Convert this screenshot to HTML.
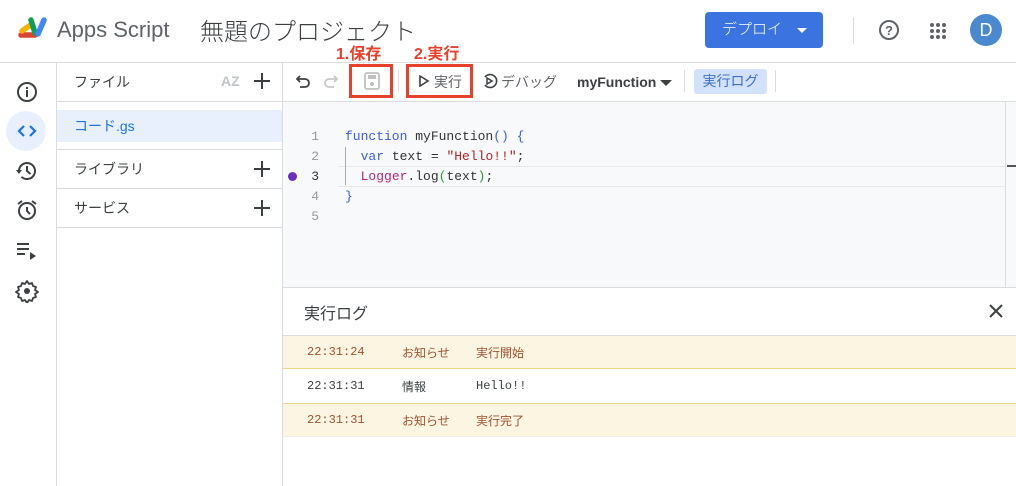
<!DOCTYPE html>
<html><head><meta charset="utf-8"><style>
*{margin:0;padding:0;box-sizing:border-box}
body{width:1016px;height:486px;overflow:hidden;background:#fff;font-family:"Liberation Sans","Noto Sans CJK JP",sans-serif;color:#3c4043;position:relative}
.a{position:absolute}
.hl{position:absolute;background:#dadce0}
.mono{font-family:"Liberation Mono","Noto Sans CJK JP",monospace}
</style></head><body>
<!-- header -->
<svg class="a" style="left:17px;top:15px" width="38" height="26" viewBox="0 0 38 26">
<g stroke-linecap="round" stroke-width="5.5" fill="none">
<line x1="4" y1="20" x2="18" y2="20" stroke="#db4437"/>
<line x1="5" y1="16" x2="15" y2="9" stroke="#f4b400"/>
<line x1="14" y1="5" x2="18" y2="18" stroke="#0f9d58"/>
<line x1="27" y1="5" x2="21" y2="19" stroke="#4285f4"/>
</g></svg>
<div class="a" style="left:57px;top:17px;font-size:22px;color:#5f6368">Apps Script</div>
<div class="a" style="left:200px;top:12px;font-size:24px;font-weight:300;color:#3c4043">無題のプロジェクト</div>
<div class="a" style="left:705px;top:12px;width:118px;height:36px;background:#3b74e0;border-radius:4px;color:#fff;font-size:15px;line-height:36px;padding-left:17px;font-weight:300">デプロイ<span style="position:absolute;left:92px;top:16px;border-left:5px solid transparent;border-right:5px solid transparent;border-top:5px solid #fff"></span></div>
<div class="hl" style="left:853px;top:17px;width:1px;height:27px"></div>
<svg class="a" style="left:878px;top:19px" width="22" height="22" viewBox="0 0 22 22"><circle cx="11" cy="11" r="9" fill="none" stroke="#5f6368" stroke-width="2"/><text x="11" y="16" font-size="13" font-weight="bold" text-anchor="middle" fill="#5f6368" font-family="Liberation Sans">?</text></svg>
<svg class="a" style="left:930px;top:23px" width="16" height="16" fill="#5f6368"><circle cx="2" cy="2" r="2"/><circle cx="8" cy="2" r="2"/><circle cx="14" cy="2" r="2"/><circle cx="2" cy="8" r="2"/><circle cx="8" cy="8" r="2"/><circle cx="14" cy="8" r="2"/><circle cx="2" cy="14" r="2"/><circle cx="8" cy="14" r="2"/><circle cx="14" cy="14" r="2"/></svg>
<div class="a" style="left:970px;top:14px;width:32px;height:32px;border-radius:50%;background:#4a89d0;color:#fff;font-size:18px;text-align:center;line-height:32px">D</div>
<div class="hl" style="left:0;top:62px;width:1016px;height:1px"></div>
<!-- left rail -->
<div class="hl" style="left:56px;top:62px;width:1px;height:424px"></div>
<svg class="a" style="left:16px;top:81px" width="22" height="22"><circle cx="11" cy="11" r="9" fill="none" stroke="#3c4043" stroke-width="2"/><rect x="10" y="9" width="2" height="7" fill="#3c4043"/><rect x="10" y="6" width="2" height="2" fill="#3c4043"/></svg>
<div class="a" style="left:6px;top:111px;width:40px;height:40px;border-radius:50%;background:#e8f0fe"></div>
<svg class="a" style="left:16px;top:122px" width="22" height="18"><path d="M8 4 L3 9 L8 14 M14 4 L19 9 L14 14" fill="none" stroke="#1a73e8" stroke-width="2.2"/></svg>
<svg class="a" style="left:15px;top:159px" width="24" height="24" viewBox="0 0 24 24"><path d="M4 12a8 8 0 1 1 2.5 5.8" fill="none" stroke="#3c4043" stroke-width="2"/><path d="M1 11h6l-3 4z" fill="#3c4043"/><path d="M12 7v5l3.5 3" fill="none" stroke="#3c4043" stroke-width="2"/></svg>
<svg class="a" style="left:15px;top:198px" width="24" height="24" viewBox="0 0 24 24"><circle cx="12" cy="13" r="8" fill="none" stroke="#3c4043" stroke-width="2"/><path d="M12 9v4l3 3M3 6l4-3M21 6l-4-3" fill="none" stroke="#3c4043" stroke-width="2"/></svg>
<svg class="a" style="left:16px;top:241px" width="22" height="20"><path d="M1 3h12M1 8h12M1 13h8" stroke="#3c4043" stroke-width="2"/><path d="M14 11l6 4-6 4z" fill="#3c4043"/></svg>
<svg class="a" style="left:15px;top:279px" width="24" height="24" viewBox="0 0 24 24"><path d="M12 2l2 3 3-1 1 3 3 1-1 3 3 2-3 2 1 3-3 1-1 3-3-1-2 3-2-3-3 1-1-3-3-1 1-3-3-2 3-2-1-3 3-1 1-3 3 1z" fill="none" stroke="#3c4043" stroke-width="1.8" stroke-linejoin="round"/><circle cx="12" cy="12" r="3" fill="#3c4043"/></svg>
<!-- files panel -->
<div class="hl" style="left:282px;top:62px;width:1px;height:424px"></div>
<div class="a" style="left:74px;top:72px;font-size:14px;color:#3c4043">ファイル</div>
<div class="a" style="left:221px;top:73px;font-size:14px;color:#c0c4c8;font-weight:bold">AZ</div>
<svg class="a" style="left:253px;top:72px" width="18" height="18"><path d="M9 1v16M1 9h16" stroke="#3c4043" stroke-width="2"/></svg>
<div class="hl" style="left:57px;top:101px;width:226px;height:1px"></div>
<div class="a" style="left:57px;top:110px;width:225px;height:32px;background:#e8f0fe"></div>
<div class="a" style="left:74px;top:116px;font-size:14px;color:#1a73e8">コード.gs</div>
<div class="hl" style="left:57px;top:149px;width:226px;height:1px"></div>
<div class="a" style="left:74px;top:159px;font-size:14px">ライブラリ</div>
<svg class="a" style="left:253px;top:160px" width="18" height="18"><path d="M9 1v16M1 9h16" stroke="#3c4043" stroke-width="2"/></svg>
<div class="hl" style="left:57px;top:188px;width:226px;height:1px"></div>
<div class="a" style="left:74px;top:198px;font-size:14px">サービス</div>
<svg class="a" style="left:253px;top:199px" width="18" height="18"><path d="M9 1v16M1 9h16" stroke="#3c4043" stroke-width="2"/></svg>
<div class="hl" style="left:57px;top:227px;width:226px;height:1px"></div>
<!-- toolbar -->
<div class="hl" style="left:283px;top:101px;width:733px;height:1px"></div>
<svg class="a" style="left:296px;top:73px" width="16" height="16"><path d="M4 3L1 6l3 3" fill="none" stroke="#3c4043" stroke-width="1.8"/><path d="M1 6h8a4 4 0 0 1 0 8H4" fill="none" stroke="#3c4043" stroke-width="1.8"/></svg>
<svg class="a" style="left:322px;top:73px" width="16" height="16"><path d="M12 3l3 3-3 3" fill="none" stroke="#c8c8c8" stroke-width="1.8"/><path d="M15 6H7a4 4 0 0 0 0 8h5" fill="none" stroke="#c8c8c8" stroke-width="1.8"/></svg>
<div class="a" style="left:349px;top:64px;width:44px;height:34px;border:3px solid #e8412b"></div>
<svg class="a" style="left:364px;top:72px" width="16" height="18"><rect x="1" y="1" width="14" height="16" rx="2" fill="none" stroke="#c0c0c0" stroke-width="1.8"/><rect x="4" y="3" width="8" height="4" fill="#c0c0c0"/><circle cx="8" cy="12" r="2" fill="#c0c0c0"/></svg>
<div class="hl" style="left:398px;top:70px;width:1px;height:22px"></div>
<div class="a" style="left:406px;top:64px;width:67px;height:34px;border:3px solid #e8412b"></div>
<svg class="a" style="left:418px;top:75px" width="12" height="12"><path d="M2 1l8 5-8 5z" fill="none" stroke="#3c4043" stroke-width="1.6"/></svg>
<div class="a" style="left:434px;top:72px;font-size:14px;color:#5f6368">実行</div>
<svg class="a" style="left:482px;top:73px" width="16" height="16"><path d="M3 4a6.5 6.5 0 1 1 0 8" fill="none" stroke="#3c4043" stroke-width="1.6"/><path d="M5 5l5 3-5 3z" fill="none" stroke="#3c4043" stroke-width="1.5"/></svg>
<div class="a" style="left:501px;top:72px;font-size:14px;color:#5f6368">デバッグ</div>
<div class="a" style="left:577px;top:74px;font-size:14px;font-weight:bold;color:#3c4043">myFunction</div>
<div class="a" style="left:660px;top:80px;border-left:6px solid transparent;border-right:6px solid transparent;border-top:6px solid #3c4043"></div>
<div class="hl" style="left:684px;top:70px;width:1px;height:22px"></div>
<div class="a" style="left:694px;top:69px;width:73px;height:25px;background:#d3e2fc;border-radius:3px;font-size:14px;text-align:center;line-height:24px;color:#3e6fc8">実行ログ</div>
<div class="hl" style="left:775px;top:70px;width:1px;height:22px"></div>
<div class="a" style="left:336px;top:40px;font-size:16px;font-weight:bold;color:#e8412b">1.保存</div>
<div class="a" style="left:414px;top:40px;font-size:16px;font-weight:bold;color:#e8412b">2.実行</div>
<!-- editor -->
<div class="a" style="left:283px;top:102px;width:733px;height:185px;background:#f8f9fa"></div>
<div class="hl" style="left:1005px;top:102px;width:1px;height:185px"></div>
<div class="a" style="left:1007px;top:165px;width:9px;height:2px;background:#555"></div>
<div class="a" style="left:338px;top:166px;width:667px;height:1px;background:#e6e8eb"></div>
<div class="a" style="left:338px;top:186px;width:667px;height:1px;background:#e6e8eb"></div>
<div class="a" style="left:345px;top:147px;width:1px;height:38px;background:#aaa"></div>
<div class="a" style="left:288px;top:172px;width:9px;height:9px;border-radius:50%;background:#6b2fbf"></div>
<div class="a mono" style="left:305px;top:127px;font-size:13px;line-height:20px;color:#999;text-align:right;width:14px">1<br>2<br><span style="color:#333">3</span><br>4<br>5</div>
<div class="a mono" style="left:345px;top:127px;font-size:13px;line-height:20px;color:#333;white-space:pre"><span style="color:#3b5fd8">function</span> myFunction<span style="color:#3b5fd8">() {</span>
  <span style="color:#3b5fd8">var</span> text = <span style="color:#b22222">"Hello!!"</span>;
  <span style="color:#b0287a">Logger</span>.log<span style="color:#2a9d3a">(</span>text<span style="color:#2a9d3a">)</span>;
<span style="color:#3b5fd8">}</span></div>
<div class="hl" style="left:283px;top:287px;width:733px;height:1px"></div>
<!-- log -->
<div class="a" style="left:304px;top:300px;font-size:16px;color:#3c4043">実行ログ</div>
<svg class="a" style="left:988px;top:303px" width="16" height="16"><path d="M2 2l12 12M14 2L2 14" stroke="#3c4043" stroke-width="2"/></svg>
<div class="hl" style="left:283px;top:335px;width:733px;height:1px"></div>
<div class="a" style="left:283px;top:336px;width:733px;height:33px;background:#fcf5e2;border-bottom:1px solid #f0d38a"></div>
<div class="a" style="left:283px;top:403px;width:733px;height:34px;background:#fcf5e2;border-top:1px solid #f0d38a"></div>
<div class="a" style="left:283px;top:436px;width:733px;height:1px;background:#eee"></div>
<div class="a mono" style="left:307px;top:345px;font-size:12px;color:#a0522d">22:31:24</div>
<div class="a" style="left:402px;top:344px;font-size:12px;color:#a0522d">お知らせ</div>
<div class="a" style="left:476px;top:344px;font-size:12px;color:#a0522d">実行開始</div>
<div class="a mono" style="left:307px;top:379px;font-size:12px;color:#3c4043">22:31:31</div>
<div class="a" style="left:402px;top:378px;font-size:12px;color:#3c4043">情報</div>
<div class="a mono" style="left:476px;top:379px;font-size:12px;color:#3c4043">Hello!!</div>
<div class="a mono" style="left:307px;top:413px;font-size:12px;color:#a0522d">22:31:31</div>
<div class="a" style="left:402px;top:412px;font-size:12px;color:#a0522d">お知らせ</div>
<div class="a" style="left:476px;top:412px;font-size:12px;color:#a0522d">実行完了</div>
</body></html>
